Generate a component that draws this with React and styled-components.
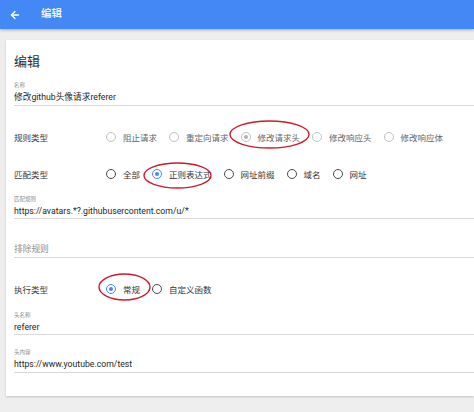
import React from 'react';
import styled, { createGlobalStyle } from 'styled-components';
import { ArrowLeft } from 'lucide-react';

const GlobalStyle = createGlobalStyle`
    html, body {
        margin: 0;
        padding: 0;
        background: #eeeeee;
        overflow: hidden;
    }
    body {
        font-family: Roboto, "Noto Sans CJK SC", sans-serif;
    }
`;

const Page = styled.div`
    position: relative;
    width: 474px;
    height: 412px;
    background: #eeeeee;
`;

const TopBar = styled.header`
    height: 29px;
    background: #4488f5;
    display: flex;
    align-items: center;
    padding-left: 9px;
    gap: 20px;
    box-shadow: 0 1px 3px rgba(0, 0, 0, 0.3);
    color: #fff;

    h1 {
        margin: 0;
        font-size: 10.5px;
        font-weight: 500;
        line-height: 1;
    }
`;

const Card = styled.main`
    margin: 11px 0 0 6px;
    padding: 14px 0 23px 8px;
    background: #fff;
    box-shadow: 0 1px 2px rgba(0, 0, 0, 0.18);
`;

const Title = styled.h2`
    margin: 0;
    font-size: 13px;
    line-height: 16px;
    font-weight: 400;
    color: #2e2e2e;
`;

const Field = styled.div`
    margin-top: ${(p) => p.$mt}px;
    padding-bottom: 1.5px;
    border-bottom: 1px solid #d8d8d8;
`;

const FieldLabel = styled.div`
    font-size: 5.5px;
    line-height: 8px;
    color: #8f8f8f;
`;

const FieldValue = styled.div`
    margin-top: 2px;
    font-size: 8.7px;
    line-height: 12px;
    color: ${(p) => (p.$placeholder ? '#8e8e8e' : '#262626')};
`;

const RadioRow = styled.div`
    margin-top: ${(p) => p.$mt}px;
    height: 20px;
    display: flex;
    align-items: center;
`;

const RowLabel = styled.div`
    width: 92px;
    font-size: 8.5px;
    color: #3a3a3a;
`;

const Option = styled.label`
    display: flex;
    align-items: center;
    gap: 7px;
    margin-right: 12px;
    font-size: 8.5px;
    color: ${(p) => (p.$disabled ? '#666' : '#333')};
`;

const Circle = styled.span`
    box-sizing: border-box;
    width: 10px;
    height: 10px;
    border-radius: 50%;
    border: 1.2px solid
        ${(p) => (p.$disabled ? '#c0c0c0' : p.$checked ? '#4488f5' : '#4a4a4a')};
    display: flex;
    align-items: center;
    justify-content: center;

    &::after {
        content: '';
        width: 4px;
        height: 4px;
        border-radius: 50%;
        background: ${(p) => (p.$disabled ? '#b0b0b0' : '#4488f5')};
        display: ${(p) => (p.$checked ? 'block' : 'none')};
    }
`;

const Mark = styled.svg`
    position: absolute;
    overflow: visible;
    pointer-events: none;
`;

const Radios = ({ label, options, checked, disabled, mt }) => (
    <RadioRow $mt={mt}>
        <RowLabel>{label}</RowLabel>
        {options.map((o) => (
            <Option key={o} $disabled={disabled}>
                <Circle $checked={o === checked} $disabled={disabled} />
                {o}
            </Option>
        ))}
    </RadioRow>
);

// red hand-drawn annotation rings
const rings = [
    { x: 229, y: 120, w: 81, h: 29 },
    { x: 143, y: 162, w: 69, h: 27 },
    { x: 98, y: 273, w: 53, h: 28 },
];

const App = () => {
    return (
        <Page>
            <GlobalStyle />
            <TopBar>
                <ArrowLeft size={12} strokeWidth={2.6} />
                <h1>编辑</h1>
            </TopBar>
            <Card>
                <Title>编辑</Title>
                <Field $mt={11}>
                    <FieldLabel>名称</FieldLabel>
                    <FieldValue>修改github头像请求referer</FieldValue>
                </Field>
                <Radios
                    mt={21}
                    label="规则类型"
                    options={['阻止请求', '重定向请求', '修改请求头', '修改响应头', '修改响应体']}
                    checked="修改请求头"
                    disabled
                />
                <Radios
                    mt={17}
                    label="匹配类型"
                    options={['全部', '正则表达式', '网址前缀', '域名', '网址']}
                    checked="正则表达式"
                />
                <Field $mt={11}>
                    <FieldLabel>匹配规则</FieldLabel>
                    <FieldValue>https://avatars.*?.githubusercontent.com/u/*</FieldValue>
                </Field>
                <Field $mt={24}>
                    <FieldValue $placeholder>排除规则</FieldValue>
                </Field>
                <Radios mt={21} label="执行类型" options={['常规', '自定义函数']} checked="常规" />
                <Field $mt={12}>
                    <FieldLabel>头名称</FieldLabel>
                    <FieldValue>referer</FieldValue>
                </Field>
                <Field $mt={13}>
                    <FieldLabel>头内容</FieldLabel>
                    <FieldValue>https://www.youtube.com/test</FieldValue>
                </Field>
            </Card>
            {rings.map((r, i) => (
                <Mark
                    key={i}
                    width={r.w}
                    height={r.h}
                    style={{ left: r.x, top: r.y }}
                >
                    <ellipse
                        cx={r.w / 2}
                        cy={r.h / 2}
                        rx={r.w / 2 - 1}
                        ry={r.h / 2 - 1}
                        fill="none"
                        stroke="#d0192b"
                        strokeWidth="1.4"
                    />
                </Mark>
            ))}
        </Page>
    );
};

export default App;
